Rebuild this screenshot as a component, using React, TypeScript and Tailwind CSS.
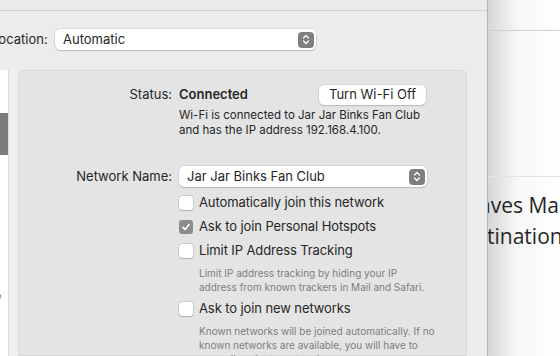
import React from 'react';

function Stepper() {
  return (
    <div className="flex h-[16px] w-[16px] items-center justify-center rounded-[4px] bg-[#7f7f7f]">
      <svg width="8" height="11" viewBox="0 0 8 11" fill="none">
        <path d="M1.5 4L4 1.5L6.5 4" stroke="white" strokeWidth="1.3" strokeLinecap="round" strokeLinejoin="round" />
        <path d="M1.5 7L4 9.5L6.5 7" stroke="white" strokeWidth="1.3" strokeLinecap="round" strokeLinejoin="round" />
      </svg>
    </div>
  );
}

function Popup({ label, width }: { label: string; width: string }) {
  return (
    <div
      className={`flex h-[21px] items-center justify-between rounded-[5px] bg-white pl-[8px] pr-[2px] shadow-[0_0_0_0.5px_rgba(0,0,0,0.12),0_1px_1.5px_rgba(0,0,0,0.15)] ${width}`}
    >
      <span className="text-[13px] text-[#262626]">{label}</span>
      <Stepper />
    </div>
  );
}

function Checkbox({ checked }: { checked?: boolean }) {
  if (checked) {
    return (
      <div className="flex h-[14px] w-[14px] shrink-0 items-center justify-center rounded-[3px] bg-[#8c8c8c]">
        <svg width="10" height="10" viewBox="0 0 10 10" fill="none">
          <path d="M2 5.3L4.1 7.5L8 2.5" stroke="white" strokeWidth="1.7" strokeLinecap="round" strokeLinejoin="round" />
        </svg>
      </div>
    );
  }
  return (
    <div className="h-[14px] w-[14px] shrink-0 rounded-[3px] bg-white shadow-[0_0_0_0.5px_rgba(0,0,0,0.2),0_0.5px_1px_rgba(0,0,0,0.15)]" />
  );
}

function CheckRow({ label, checked }: { label: string; checked?: boolean }) {
  return (
    <div className="flex h-[24px] items-center gap-[6px]">
      <Checkbox checked={checked} />
      <span className="text-[13px] tracking-[-0.1px] text-[#262626]">{label}</span>
    </div>
  );
}

export default function App() {
  return (
    <div className="flex h-[356px] w-[560px] overflow-hidden bg-white font-['Inter',sans-serif]">
      {/* settings window */}
      <div className="flex h-full w-[488px] shrink-0 flex-col overflow-hidden border-r border-[#b4b4b4] bg-[#ececec]">
        <div className="h-[11px] shrink-0 border-b border-[#d2d2d2] bg-[#ebebeb]" />
        <div className="mt-[18px] flex h-[21px] shrink-0 items-center">
          <span className="ml-[-9px] w-[57px] text-[13px] text-[#262626]">Location:</span>
          <div className="ml-[7px]">
            <Popup label="Automatic" width="w-[261px]" />
          </div>
        </div>

        <div className="mt-[20px] flex min-h-0 flex-1">
          {/* sidebar */}
          <div className="flex w-[9px] flex-col border-r border-[#dadada] bg-white">
            <div className="h-[43px] shrink-0" />
            <div className="h-[42px] shrink-0 bg-[#7b7b7b]" />
            <div className="ml-[-4px] mt-[136px] text-[9px] leading-none text-[#444]">e</div>
          </div>
          <div className="w-[9px] bg-[#efefef]" />

          {/* panel */}
          <div className="w-[449px] rounded-t-[6px] border border-[#d8d8d8] bg-[#e4e4e4] pt-[14px]">
            <div className="flex items-center">
              <span className="w-[153px] text-right text-[13px] text-[#262626]">Status:</span>
              <span className="ml-[7px] text-[13px] font-semibold text-[#262626]">Connected</span>
              <button className="ml-auto mr-[40px] flex h-[20px] w-[107px] items-center justify-center rounded-[5px] bg-white text-[13px] text-[#262626] shadow-[0_0_0_0.5px_rgba(0,0,0,0.12),0_1px_1.5px_rgba(0,0,0,0.15)]">
                Turn Wi-Fi Off
              </button>
            </div>
            <div className="ml-[160px] mt-[3px] text-[11.5px] leading-[15px] text-[#262626]">
              <div>Wi-Fi is connected to Jar Jar Binks Fan Club</div>
              <div>and has the IP address 192.168.4.100.</div>
            </div>

            <div className="mt-[28px] flex items-center">
              <span className="w-[153px] text-right text-[13px] text-[#262626]">Network Name:</span>
              <div className="ml-[7px]">
                <Popup label="Jar Jar Binks Fan Club" width="w-[248px]" />
              </div>
            </div>

            <div className="ml-[160px] mt-[4px]">
              <CheckRow label="Automatically join this network" />
              <CheckRow label="Ask to join Personal Hotspots" checked />
              <CheckRow label="Limit IP Address Tracking" />
              <div className="ml-[20px] mt-[3px] text-[10px] leading-[14px] text-[#7d7d7d]">
                <div>Limit IP address tracking by hiding your IP</div>
                <div>address from known trackers in Mail and Safari.</div>
              </div>
              <div className="mt-[3px]">
                <CheckRow label="Ask to join new networks" />
              </div>
              <div className="ml-[20px] mt-[3px] text-[10px] leading-[14px] text-[#7d7d7d]">
                <div>Known networks will be joined automatically. If no</div>
                <div>known networks are available, you will have to</div>
                <div>manually select a network.</div>
              </div>
            </div>
          </div>
        </div>
      </div>

      {/* web page behind */}
      <div className="relative flex-1 overflow-hidden bg-gradient-to-r from-[#d6d6d6] via-[#f7f7f7] via-40% to-white">
        <div className="h-[31px] border-b border-[#cfcfcf]" />
        <div className="mt-[145px] border-t border-[#e2e2e2]" />
        <div className="ml-[-9px] mt-[13px] whitespace-nowrap font-['Open_Sans',sans-serif] text-[21px] font-medium leading-[31px] text-[#262626]">
          <div>aves Mandalorian</div>
          <div className="ml-[-2px]">stination</div>
        </div>
      </div>
    </div>
  );
}
